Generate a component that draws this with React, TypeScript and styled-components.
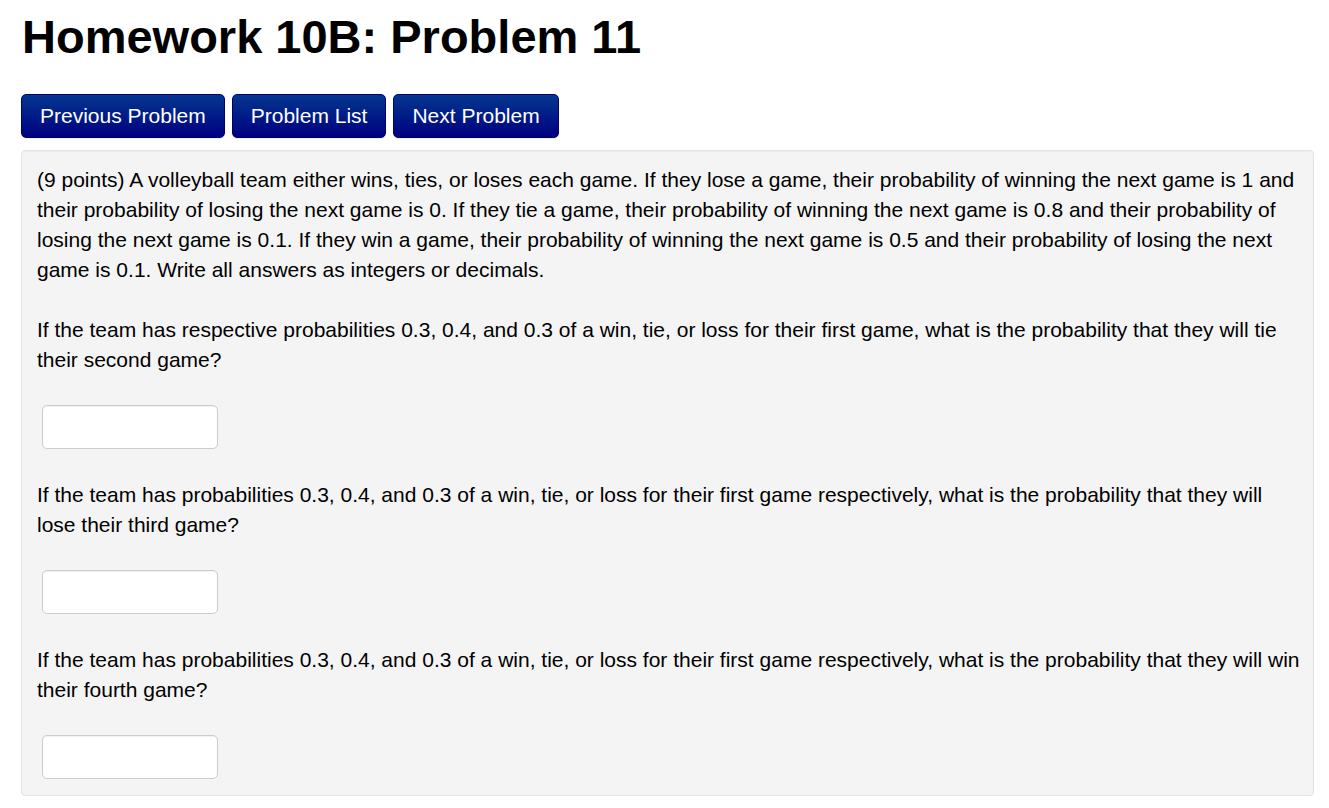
import React from "react";
import styled, { createGlobalStyle } from "styled-components";

const Global = createGlobalStyle`
  html, body { margin: 0; padding: 0; background: #ffffff; }
  body { font-family: "Liberation Sans", Arial, sans-serif; color: #000; }
`;

const Page = styled.div`
  padding: 10px 15px 0 21px;
  display: flex;
  flex-direction: column;
`;

const Title = styled.h1`
  margin: 0 0 30px 1px;
  font-size: 47px;
  font-weight: bold;
  line-height: 54px;
  color: #000;
`;

const Toolbar = styled.nav`
  display: flex;
  gap: 7px;
  margin-bottom: 12px;
`;

const NavButton = styled.button`
  height: 44px;
  padding: 0 18px;
  border: 1px solid #00006a;
  border-radius: 5px;
  background: linear-gradient(to bottom, #05368f 0%, #001c88 50%, #000080 100%);
  color: #fff;
  font-family: "Liberation Sans", Arial, sans-serif;
  font-size: 21px;
  cursor: pointer;
  box-shadow: 0 1px 1px rgba(0, 0, 0, 0.08);
`;

const Well = styled.section`
  background: #f4f4f4;
  border: 1px solid #e3e3e3;
  border-radius: 4px;
  padding: 14px 12px 15px 15px;
  display: flex;
  flex-direction: column;
  gap: 30px;
  box-shadow: inset 0 1px 1px rgba(0, 0, 0, 0.03);
`;

const Text = styled.p`
  margin: 0;
  font-size: 21px;
  line-height: 30px;
  color: #000;
`;

const AnswerRow = styled.div`
  height: 45px;
  padding-left: 5px;
`;

const Answer = styled.input`
  box-sizing: border-box;
  width: 176px;
  height: 44px;
  border: 1px solid #cccccc;
  border-radius: 5px;
  background: #ffffff;
  box-shadow: inset 0 1px 1px rgba(0, 0, 0, 0.06);
  font-family: "Liberation Sans", Arial, sans-serif;
  font-size: 20px;
  padding: 0 8px;
  outline: none;
`;

const questions = [
  "If the team has respective probabilities 0.3, 0.4, and 0.3 of a win, tie, or loss for their first game, what is the probability that they will tie their second game?",
  "If the team has probabilities 0.3, 0.4, and 0.3 of a win, tie, or loss for their first game respectively, what is the probability that they will lose their third game?",
  "If the team has probabilities 0.3, 0.4, and 0.3 of a win, tie, or loss for their first game respectively, what is the probability that they will win their fourth game?",
];

export default function App() {
  return (
    <>
      <Global />
      <Page>
        <Title>Homework 10B: Problem 11</Title>
        <Toolbar>
          <NavButton>Previous Problem</NavButton>
          <NavButton>Problem List</NavButton>
          <NavButton>Next Problem</NavButton>
        </Toolbar>
        <Well>
          <Text>
            (9 points) A volleyball team either wins, ties, or loses each game. If they lose a game, their
            probability of winning the next game is 1 and their probability of losing the next game is 0. If they
            tie a game, their probability of winning the next game is 0.8 and their probability of losing the next
            game is 0.1. If they win a game, their probability of winning the next game is 0.5 and their
            probability of losing the next game is 0.1. Write all answers as integers or decimals.
          </Text>
          {questions.map((q, i) => (
            <React.Fragment key={i}>
              <Text>{q}</Text>
              <AnswerRow>
                <Answer type="text" aria-label={`answer ${i + 1}`} />
              </AnswerRow>
            </React.Fragment>
          ))}
        </Well>
      </Page>
    </>
  );
}
